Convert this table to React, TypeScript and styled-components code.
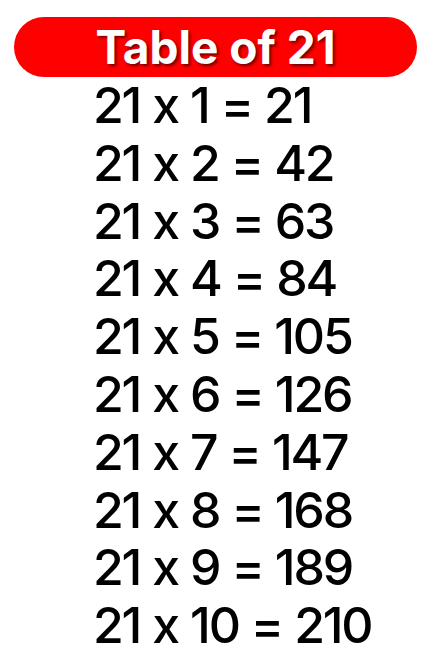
import React from 'react'
import styled, { createGlobalStyle } from 'styled-components'

const GlobalStyle = createGlobalStyle`
  body {
    margin: 0;
    background: #ffffff;
    font-family: Inter, "Noto Sans", sans-serif;
    font-feature-settings: "calt" 0;
  }
`

const multiplier = 21
const rows = Array.from({ length: 10 }, (_, i) => i + 1)

const App: React.FC = () => {
  return (
    <StyledPage>
      <GlobalStyle />
      <StyledHeader>
        <StyledTitle>Table of {multiplier}</StyledTitle>
      </StyledHeader>
      <StyledList>
        {rows.map((n) => (
          <StyledRow key={n}>
            {multiplier} x {n} = {multiplier * n}
          </StyledRow>
        ))}
      </StyledList>
    </StyledPage>
  )
}

const StyledPage = styled.div`
  width: 438px;
  height: 665px;
  display: flex;
  flex-direction: column;
  padding-top: 17px;
  box-sizing: border-box;
  overflow: hidden;
`

const StyledHeader = styled.div`
  margin-left: 14px;
  width: 403px;
  height: 60px;
  border-radius: 30px;
  background: #fe0000;
  display: flex;
  align-items: center;
  justify-content: center;
`

const StyledTitle = styled.div`
  color: #ffffff;
  font-size: 46px;
  font-weight: 700;
  text-shadow: 2px 2px 3px rgba(0, 0, 0, 0.55);
  line-height: 1;
`

const StyledList = styled.div`
  display: flex;
  flex-direction: column;
  padding-left: 93px;
`

const StyledRow = styled.div`
  color: #000000;
  font-size: 50px;
  font-weight: 500;
  letter-spacing: -2.2px;
  word-spacing: 1px;
  line-height: 57.8px;
  white-space: pre;
`

export default App
